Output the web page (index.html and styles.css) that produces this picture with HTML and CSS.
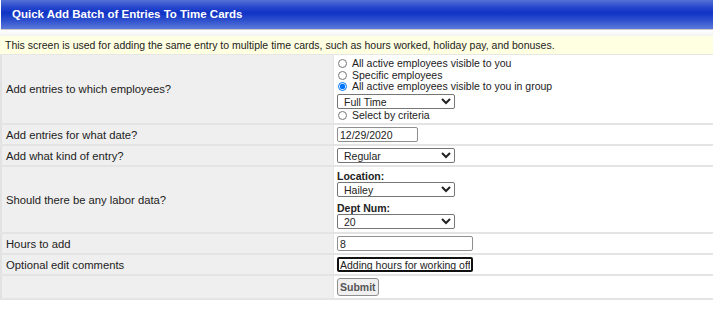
FILE: index.html
```html
<!DOCTYPE HTML>
<html>
<head>
	<title>Quick Add Batch of Entries To Time Cards</title>
	<link rel="stylesheet" href="styles.css">
</head>
<body>

	<div class='titlebar'>Quick Add Batch of Entries To Time Cards</div>
	<div class='gap'></div>
	<div class='notice'>This screen is used for adding the same entry to multiple time cards, such as hours worked, holiday pay, and bonuses.</div>

	<table class='form'>
		<tr class='r-emp'>
			<td class='label'>Add entries to which employees?</td>
			<td class='field'>
				<div class='opt'><input type='radio' name='who' class='radio'> All active employees visible to you</div>
				<div class='opt'><input type='radio' name='who' class='radio'> Specific employees</div>
				<div class='opt'><input type='radio' name='who' class='radio' checked> All active employees visible to you in group</div>
				<select class='sel'><option>Full Time</option></select>
				<div class='opt'><input type='radio' name='who' class='radio'> Select by criteria</div>
			</td>
		</tr>
		<tr>
			<td class='label'>Add entries for what date?</td>
			<td class='field'><input type='text' class='txt date' value='12/29/2020'></td>
		</tr>
		<tr>
			<td class='label'>Add what kind of entry?</td>
			<td class='field'><select class='sel'><option>Regular</option></select></td>
		</tr>
		<tr>
			<td class='label'>Should there be any labor data?</td>
			<td class='field labor'>
				<div class='sub'>Location:</div>
				<select class='sel'><option>Hailey</option></select>
				<div class='sub dept'>Dept Num:</div>
				<select class='sel'><option>20</option></select>
			</td>
		</tr>
		<tr>
			<td class='label'>Hours to add</td>
			<td class='field'><input type='text' class='txt wide' value='8'></td>
		</tr>
		<tr>
			<td class='label'>Optional edit comments</td>
			<td class='field'><input type='text' class='txt wide focus' value='Adding hours for working off'></td>
		</tr>
		<tr>
			<td class='label'></td>
			<td class='field'><input type='button' class='btn' value='Submit'></td>
		</tr>
	</table>

</body>
</html>
```

FILE: styles.css
```css
body {
	margin: 0;
	font-family: "Liberation Sans", Arial, sans-serif;
	font-size: 10.5px;
	color: #222;
	width: 713px;
}

.titlebar {
	margin-left: 1px;
	height: 29px;
	line-height: 28px;
	padding-left: 11px;
	color: #fff;
	font-weight: bold;
	font-size: 11.5px;
	background: linear-gradient(#5671d6 0%, #2646cb 25%, #0f33c6 45%, #3456cf 75%, #5d79d9 100%);
	border-bottom: 1px solid #c9c9c9;
}

.gap {
	height: 6px;
	background: linear-gradient(#ffffff, #f2f2f2);
}

.notice {
	background: #ffffe1;
	padding: 2px 5px 2px 5px;
	line-height: 14px;
	border-bottom: 1px solid #e6e6e6;
}

.form {
	width: 100%;
	border-collapse: collapse;
	border-left: 2px solid #e2e2e2;
}

.form td {
	border-bottom: 2px solid #e4e4e4;
	padding: 0;
	vertical-align: middle;
}

.label {
	width: 327px;
	font-size: 11.25px;
	background: #efefef;
	padding-left: 4px !important;
	border-right: 1px solid #e6e6e6;
}

.field {
	background: #fff;
	padding: 2px 3px 2px 3px !important;
}

.r-emp .field {
	padding-top: 3px !important;
}

.opt {
	height: 11.5px;
	line-height: 11.5px;
	display: flex;
	align-items: center;
	white-space: nowrap;
}

.radio {
	width: 9px;
	height: 9px;
	margin: 0 5px 0 1px;
	flex: none;
}

.sel {
	width: 118px;
	height: 15px;
	font-family: inherit;
	font-size: 10.5px;
	padding: 0 0 0 2px;
	border: 1px solid #767676;
	border-radius: 2px;
	background: #fff;
	color: #222;
	display: block;
}

.r-emp .sel {
	margin: 1px 0 1px 0;
}

.txt {
	height: 15px;
	font-family: inherit;
	font-size: 10.5px;
	padding: 0 2px;
	border: 1px solid #8f8f8f;
	border-radius: 2px;
	box-sizing: border-box;
	color: #222;
	display: block;
}

.date {
	width: 81px;
}

.wide {
	width: 136px;
}

.focus {
	border: 2px solid #111;
	padding: 0 1px;
}

.labor {
	padding-top: 3px !important;
	padding-bottom: 3px !important;
}

.sub {
	font-weight: bold;
	line-height: 12px;
}

.dept {
	margin-top: 5px;
}

.btn {
	height: 18px;
	font-family: inherit;
	font-size: 10.5px;
	font-weight: bold;
	color: #555;
	padding: 0 2px;
	border: 1px solid #8f8f8f;
	border-radius: 3px;
	background: #f0f0f0;
	display: block;
}
```
